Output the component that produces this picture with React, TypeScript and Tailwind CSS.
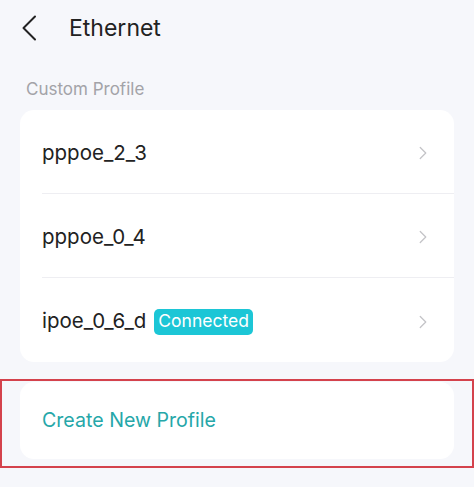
import { ChevronRight } from "lucide-react"

const profiles = [
  { name: "pppoe_2_3", connected: false },
  { name: "pppoe_0_4", connected: false },
  { name: "ipoe_0_6_d", connected: true },
]

export default function App() {
  return (
    <div
      className="w-[474px] h-[487px] bg-[#f6f7fb] overflow-hidden"
      style={{ fontFamily: "Inter, 'Noto Sans', sans-serif" }}
    >
      {/* Header */}
      <div className="flex items-center h-[56px] pl-[20px]">
        <svg width="20" height="28" viewBox="0 0 20 28" fill="none" className="text-[#222]">
          <polyline points="15,2.5 3.5,14 15,25.5" stroke="currentColor" strokeWidth="2" strokeLinecap="round" strokeLinejoin="round" />
        </svg>
        <span className="ml-[29px] text-[23px] text-[#222]">Ethernet</span>
      </div>

      <div className="pl-[26px] pt-[21px] h-[54px] text-[17px] text-[#a3a3a8]">Custom Profile</div>

      {/* Profiles */}
      <div className="mx-[20px] bg-white rounded-[14px] overflow-hidden">
        {profiles.map((p, i) => (
          <div key={p.name} className="pl-[22px]">
            <div
              className={
                "flex items-center h-[84px] pt-[3px] pr-[22px] " +
                (i < profiles.length - 1 ? "border-b border-[#eeeef2]" : "")
              }
            >
              <span className="text-[20.5px] text-[#222]">{p.name}</span>
              {p.connected && (
                <span className="ml-[8px] px-[4px] h-[26px] flex items-center rounded-[5px] bg-[#1cc6d6] text-white text-[17.5px]">
                  Connected
                </span>
              )}
              <ChevronRight className="ml-auto -mr-[2px] w-[22px] h-[22px] text-[#c4c4c8]" strokeWidth={1.4} />
            </div>
          </div>
        ))}
      </div>

      {/* Create */}
      <div className="mt-[17px] border-2 border-[#d4424c] pt-[1px] pb-[7px] px-[18px]">
        <div className="bg-white rounded-[14px] h-[77px] flex items-center pl-[22px]">
          <span className="text-[19.6px] text-[#26a7a9]">Create New Profile</span>
        </div>
      </div>
    </div>
  )
}
